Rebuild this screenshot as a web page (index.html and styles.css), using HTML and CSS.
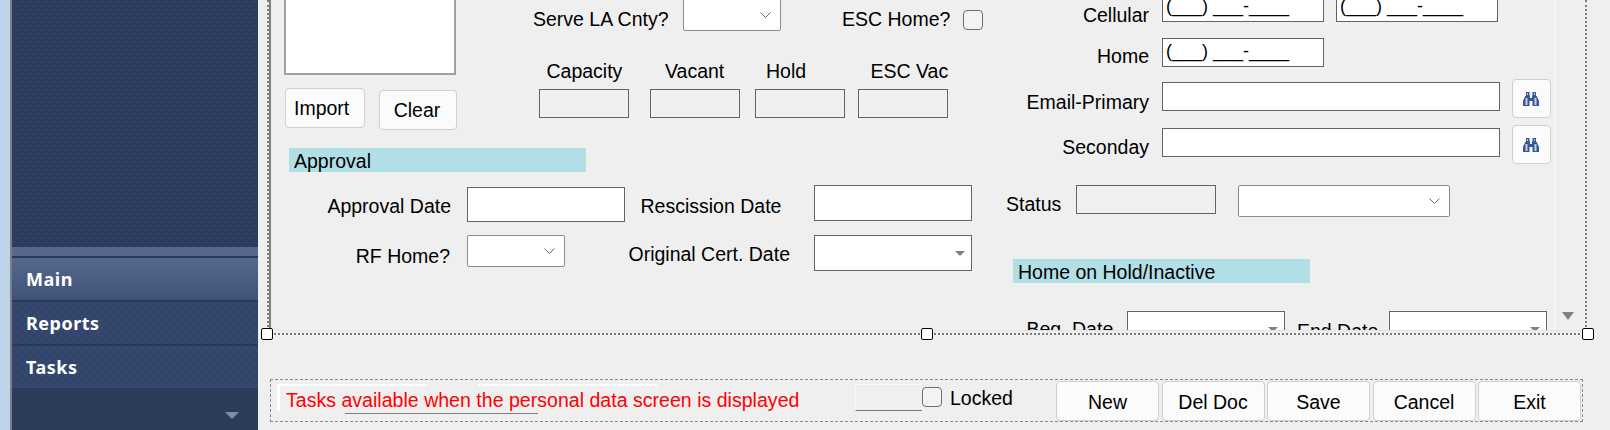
FILE: index.html
```html
<!DOCTYPE html>
<html lang="en">
<head>
    <meta charset="UTF-8">
    <title>Personal Data</title>
    <link rel="stylesheet" href="styles.css">
</head>
<body>
    <div class="app">
        <div class="edge"></div>

        <!-- Left navigation -->
        <nav class="nav">
            <div class="nav-pane"></div>
            <div class="nav-header"></div>
            <div class="nav-item nav-item-active">Main</div>
            <div class="nav-item">Reports</div>
            <div class="nav-item">Tasks</div>
            <div class="nav-footer"><span class="nav-arrow"></span></div>
        </nav>

        <main class="workspace">
            <!-- Form in its designer frame -->
            <div class="designer">
                <div class="form-frame">
                    <div class="form">
                        <div class="col-main">
                            <div class="top-block">
                                <div class="photo-col">
                                    <div class="photo"></div>
                                    <div class="photo-buttons">
                                        <button class="btn btn-import">Import</button>
                                        <button class="btn btn-clear">Clear</button>
                                    </div>
                                </div>
                                <div class="mid-col">
                                    <div class="serve-row">
                                        <label class="lbl-serve">Serve LA Cnty?</label>
                                        <div class="field select select-serve"><svg class="chevron" viewBox="0 0 11 6"><path d="M.5.5l5 5 5-5"/></svg></div>
                                        <label class="lbl-esc">ESC Home?</label>
                                        <span class="check check-esc"></span>
                                    </div>
                                    <div class="count-labels">
                                        <span>Capacity</span>
                                        <span>Vacant</span>
                                        <span>Hold</span>
                                        <span>ESC Vac</span>
                                    </div>
                                    <div class="count-boxes">
                                        <div class="field readonly"></div>
                                        <div class="field readonly"></div>
                                        <div class="field readonly"></div>
                                        <div class="field readonly"></div>
                                    </div>
                                </div>
                            </div>

                            <div class="section-bar bar-approval">Approval</div>
                            <div class="approval-row">
                                <label class="lbl-approval">Approval Date</label>
                                <div class="field input-approval"></div>
                                <label class="lbl-rescission">Rescission Date</label>
                                <div class="field input-rescission"></div>
                            </div>
                            <div class="rf-row">
                                <label class="lbl-rf">RF Home?</label>
                                <div class="field select select-rf"><svg class="chevron" viewBox="0 0 11 6"><path d="M.5.5l5 5 5-5"/></svg></div>
                                <label class="lbl-cert">Original Cert. Date</label>
                                <div class="field combo combo-cert"><span class="combo-arrow"></span></div>
                            </div>
                        </div>

                        <div class="col-side">
                            <div class="contact-row row-cell">
                                <label class="lbl-cell">Cellular</label>
                                <div class="field phone">(___) ___-____</div>
                                <div class="field phone phone-second">(___) ___-____</div>
                            </div>
                            <div class="contact-row row-home">
                                <label class="lbl-home">Home</label>
                                <div class="field phone">(___) ___-____</div>
                            </div>
                            <div class="contact-row row-email">
                                <label class="lbl-email">Email-Primary</label>
                                <div class="field email"></div>
                                <button class="btn btn-find">
                                    <svg class="binoculars" viewBox="0 0 16 14"><path fill="#3a5596" d="M3 0h3.500v3.500H7V6h2V3.500h.5V0H13v3.500l1 1L16 9v5H9.500V9H6.500v5H0V9l2-4.500 1-1z"/><path fill="#c3d0ea" d="M4 1h1v2H4zM11 1h1v2h-1zM2.500 6h2v7h-2zM11.500 6h2v7h-2z"/></svg>
                                </button>
                            </div>
                            <div class="contact-row row-second">
                                <label class="lbl-second">Seconday</label>
                                <div class="field email"></div>
                                <button class="btn btn-find">
                                    <svg class="binoculars" viewBox="0 0 16 14"><path fill="#3a5596" d="M3 0h3.500v3.500H7V6h2V3.500h.5V0H13v3.500l1 1L16 9v5H9.500V9H6.500v5H0V9l2-4.500 1-1z"/><path fill="#c3d0ea" d="M4 1h1v2H4zM11 1h1v2h-1zM2.500 6h2v7h-2zM11.500 6h2v7h-2z"/></svg>
                                </button>
                            </div>
                            <div class="status-row">
                                <label class="lbl-status">Status</label>
                                <div class="field readonly status-box"></div>
                                <div class="field select select-status"><svg class="chevron" viewBox="0 0 11 6"><path d="M.5.5l5 5 5-5"/></svg></div>
                            </div>
                            <div class="section-bar bar-hold">Home on Hold/Inactive</div>
                            <div class="hold-row">
                                <label class="lbl-beg">Beg. Date</label>
                                <div class="field combo combo-beg"><span class="combo-arrow"></span></div>
                                <label class="lbl-end">End Date</label>
                                <div class="field combo combo-end"><span class="combo-arrow"></span></div>
                            </div>
                        </div>
                    </div>
                    <div class="scrollbar"><span class="scroll-arrow"></span></div>
                </div>
                <span class="handle handle-left"></span>
                <span class="handle handle-mid"></span>
                <span class="handle handle-right"></span>
            </div>

            <!-- Bottom command bar -->
            <div class="toolbar">
                <div class="task-msg">Tasks available when the personal data screen is displayed</div>
                <div class="lock-box"></div>
                <span class="check check-lock"></span>
                <label class="lbl-lock">Locked</label>
                <div class="commands">
                    <button class="btn cmd">New</button>
                    <button class="btn cmd">Del Doc</button>
                    <button class="btn cmd">Save</button>
                    <button class="btn cmd">Cancel</button>
                    <button class="btn cmd">Exit</button>
                </div>
            </div>
        </main>
    </div>
</body>
</html>
```

FILE: styles.css
```css
/* General Styles */
* {
    box-sizing: border-box;
}

html, body {
    margin: 0;
    height: 430px;
    overflow: hidden;
}

body {
    font-family: 'Liberation Sans', Arial, sans-serif;
    font-size: 19.5px;
    color: #000;
    background-color: #efefef;
}

label, .count-labels span {
    display: block;
    line-height: 22px;
    white-space: nowrap;
    flex: none;
}

.app {
    display: flex;
    height: 430px;
}

.edge {
    width: 12px;
    background-color: #bcd3ea;
    border-right: 2px solid #7b7f86;
}

/* Left navigation */
.nav {
    width: 246px;
    display: flex;
    flex-direction: column;
    font-family: 'Noto Sans', sans-serif;
    font-size: 18px;
    font-weight: 700;
    letter-spacing: .5px;
    color: #fff;
}

.nav-pane {
    height: 247px;
    background-color: #2c3b5c;
    background-image:
        radial-gradient(circle at 2px 2px, #33446a 1px, transparent 1.3px),
        radial-gradient(circle at 6px 6px, #33446a 1px, transparent 1.3px);
    background-size: 8px 8px;
}

.nav-header {
    height: 11px;
    background-color: #56698d;
    border-bottom: 2px solid #2b3958;
}

.nav-item {
    height: 44px;
    padding-left: 14px;
    line-height: 43px;
    border-bottom: 2px solid #2b3958;
    background-color: #33456b;
    background-image:
        radial-gradient(circle at 2px 2px, #3a4d76 1px, transparent 1.3px),
        radial-gradient(circle at 6px 6px, #3a4d76 1px, transparent 1.3px);
    background-size: 8px 8px;
}

.nav-item:nth-child(5) {
    border-bottom: 0;
    height: 42px;
}

.nav-item-active {
    background-image: linear-gradient(#55688c, #3f5279);
    background-size: auto;
}

.nav-footer {
    flex: 1;
    background-color: #2c3b5a;
    display: flex;
    justify-content: flex-end;
    padding: 24px 19px 0 0;
}

.nav-arrow {
    width: 0;
    height: 0;
    border-left: 7px solid transparent;
    border-right: 7px solid transparent;
    border-top: 7px solid #7d8cab;
}

/* Designer frame */
.workspace {
    flex: 1;
    min-width: 0;
}

.designer {
    position: relative;
    width: 1320px;
    height: 335px;
    margin-left: 9px;
    border: 2px dotted #7c7c7c;
    border-width: 0 2px 2px 2px;
}

.form-frame {
    display: flex;
    height: 331px;
    border-left: 2px solid #808080;
    border-bottom: 1px solid #e2e2e2;
    overflow: hidden;
}

.form {
    display: flex;
    width: 1283px;
    height: 330px;
    padding-left: 13px;
    overflow: hidden;
}

.form > div {
    margin-top: -10px;
}

.scrollbar {
    flex: 1;
    display: flex;
    justify-content: center;
    align-items: flex-end;
    padding: 0 5px 10px 0;
    border-left: 1px solid #f9f9f9;
}

.scroll-arrow {
    width: 0;
    height: 0;
    border-left: 6px solid transparent;
    border-right: 6px solid transparent;
    border-top: 8px solid #808080;
}

.handle {
    position: absolute;
    bottom: -7px;
    width: 12px;
    height: 12px;
    background-color: #fff;
    border: 1px solid #000;
    border-radius: 2px;
}

.handle-left { left: -8px; }
.handle-mid { left: 652px; }
.handle-right { right: -9px; }

/* Shared controls */
.field {
    flex: none;
    background-color: #fff;
    border: 1px solid #646464;
}

.readonly {
    background-color: #f0f0f0;
}

.select {
    position: relative;
    border-color: #8c8c8c;
    border-radius: 2px;
}

.chevron {
    position: absolute;
    right: 9px;
    top: 12px;
    width: 11px;
    height: 6px;
    fill: none;
    stroke: #666;
}

.combo {
    position: relative;
}

.combo-arrow {
    position: absolute;
    right: 6px;
    top: 15px;
    width: 0;
    height: 0;
    border-left: 5px solid transparent;
    border-right: 5px solid transparent;
    border-top: 5px solid #808080;
}

.btn {
    flex: none;
    padding: 0;
    font: inherit;
    color: #000;
    background-color: #fbfbfb;
    border: 1px solid #cfcfcf;
    border-radius: 4px;
}

.check {
    flex: none;
    width: 20px;
    height: 20px;
    background-color: #f3f3f3;
    border: 1px solid #6e6e6e;
    border-radius: 4px;
}

.section-bar {
    height: 24px;
    width: 297px;
    padding-left: 5px;
    line-height: 26px;
    background-color: #b0dfe5;
}

/* Left column */
.col-main {
    width: 722px;
    flex: none;
}

.top-block {
    display: flex;
}

.photo-col {
    width: 173px;
    flex: none;
}

.photo {
    width: 172px;
    height: 85px;
    background-color: #fff;
    border: 2px solid #a0a0a0;
}

.photo-buttons {
    display: flex;
    align-items: flex-start;
    margin-top: 13px;
}

.btn-import {
    width: 80px;
    height: 40px;
    margin-left: 1px;
    padding-left: 8px;
    text-align: left;
}

.btn-clear {
    width: 78px;
    height: 40px;
    margin: 2px 0 0 14px;
    padding-right: 2px;
}

.mid-col {
    margin-left: 76px;
}

.serve-row {
    display: flex;
    align-items: flex-start;
    margin-top: 9px;
}

.lbl-serve {
    width: 138.5px;
    margin-top: 9px;
}

.select-serve {
    width: 98px;
    height: 32px;
    margin-left: 11.5px;
}

.lbl-esc {
    width: 108px;
    margin: 9px 0 0 61px;
}

.check-esc {
    margin: 11px 0 0 12.5px;
}

.count-labels {
    display: grid;
    grid-template-columns: 118.5px 101px 104.5px auto;
    margin: 29px 0 0 13.5px;
}

.count-boxes {
    display: grid;
    grid-template-columns: 110.5px 105.5px 103px 90px;
    height: 29px;
    margin: 7px 0 0 6px;
}

.count-boxes .field {
    width: 90px;
}

.bar-approval {
    margin: 18px 0 0 5px;
}

.approval-row,
.rf-row {
    display: flex;
    align-items: flex-start;
    margin-top: 13px;
}

.lbl-approval {
    width: 167px;
    margin-top: 10px;
    text-align: right;
}

.input-approval {
    width: 158px;
    height: 35px;
    margin: 2px 0 0 16px;
}

.lbl-rescission {
    width: 139.5px;
    margin: 10px 0 0 15.5px;
}

.input-rescission {
    width: 158px;
    height: 35.5px;
    margin-left: 33.5px;
}

.lbl-rf {
    width: 166px;
    margin-top: 10px;
    text-align: right;
}

.select-rf {
    width: 98px;
    height: 32px;
    margin-left: 17px;
}

.lbl-cert {
    width: 159px;
    margin: 8px 0 0 63.5px;
}

.combo-cert {
    width: 158px;
    height: 36px;
    margin-left: 26px;
}

/* Right column */
.col-side {
    flex: 1;
}

.contact-row {
    display: flex;
    align-items: flex-start;
}

.contact-row label {
    width: 143px;
    text-align: right;
}

.contact-row .field {
    height: 28.5px;
    margin-left: 13px;
}

.phone {
    width: 162px;
    padding-left: 3px;
    font-size: 18px;
    line-height: 25px;
    white-space: nowrap;
}

.contact-row .phone-second {
    margin-left: 12px;
}

.row-cell {
    height: 28.5px;
    margin-top: 3px;
}

.row-home {
    height: 28.5px;
    margin-top: 16.5px;
}

.row-email { margin-top: 12.5px; }
.row-second { margin-top: 7px; }

.lbl-cell { margin-top: 10.5px; }
.lbl-home { margin-top: 7px; }
.lbl-email { margin-top: 12px; }
.lbl-second { margin-top: 11px; }

.contact-row .email {
    width: 338px;
    margin-top: 3px;
}

.btn-find {
    display: flex;
    align-items: center;
    justify-content: center;
    width: 39px;
    height: 39px;
    margin-left: 11.5px;
}

.binoculars {
    width: 16px;
    height: 14px;
}

.status-row,
.hold-row {
    display: flex;
    align-items: flex-start;
}

.status-row {
    margin-top: 21px;
}

.lbl-status {
    width: 70px;
    margin-top: 8px;
}

.status-box {
    width: 140px;
    height: 29px;
}

.select-status {
    width: 212px;
    height: 32px;
    margin-left: 21.5px;
}

.bar-hold {
    margin: 42px 0 0 7px;
}

.hold-row {
    margin-top: 28px;
}

.lbl-beg {
    width: 100.5px;
    margin: 7px 0 0 20.5px;
}

.combo-beg {
    width: 157.5px;
    height: 36px;
}

.lbl-end {
    width: 92px;
    margin: 9px 0 0 12.5px;
}

.combo-end {
    width: 158px;
    height: 36px;
}

/* Bottom command bar */
.toolbar {
    display: flex;
    align-items: flex-start;
    width: 1313px;
    height: 43px;
    margin: 44px 0 0 11.5px;
    border: 1px dashed #8a8a8a;
}

.task-msg {
    position: relative;
    flex: none;
    width: 578px;
    height: 27px;
    margin: 4px 0 0 6.5px;
    padding-left: 6px;
    border-left: 3px solid #fff;
    color: #f00;
    letter-spacing: .03px;
    line-height: 33px;
    white-space: nowrap;
}

/* white and grey slivers of the panels stacked behind the message */
.task-msg::before {
    content: "";
    position: absolute;
    left: -3px;
    top: 0;
    width: 380px;
    height: 2px;
    background-image: linear-gradient(to right, #fff 150px, transparent 150px, transparent 201px, #fff 201px);
}

.task-msg::after {
    content: "";
    position: absolute;
    left: 65px;
    top: 29px;
    width: 193px;
    height: 1px;
    background-color: #808080;
}

.lock-box {
    flex: none;
    width: 67px;
    height: 27px;
    margin-top: 4px;
    border-top: 1px solid #f9f9f9;
    border-left: 1px solid #f9f9f9;
    border-bottom: 1px solid #7a7a7a;
}

.check-lock {
    margin-top: 7px;
}

.lbl-lock {
    width: 64px;
    margin: 7px 0 0 8px;
}

.commands {
    display: flex;
    gap: 2.5px;
    margin: 1px 0 0 42px;
}

.cmd {
    width: 103px;
    height: 40px;
    padding-top: 2px;
}
```
